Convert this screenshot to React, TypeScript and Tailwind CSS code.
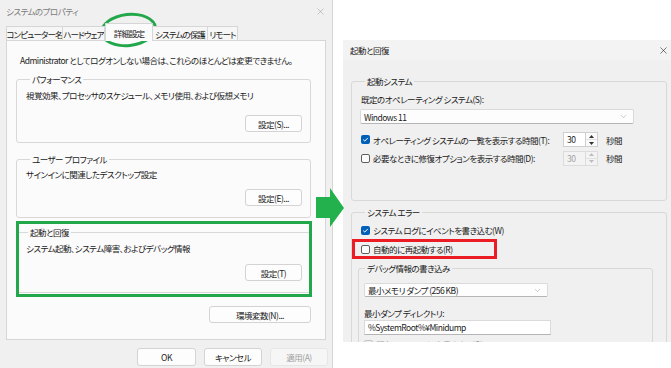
import type { ReactNode } from 'react';
import clsx from 'clsx';
import { X, ChevronDown } from 'lucide-react';

const GREEN = 'border-[#22a84a]';

function GroupBox({
  label,
  className,
  legendClass,
  children,
}: {
  label: string;
  className?: string;
  legendClass?: string;
  children: ReactNode;
}) {
  return (
    <fieldset className={clsx('border border-[#d8d8d8] rounded-[3px] min-w-0', className)}>
      <legend className={clsx('px-[2px] leading-[12px]', legendClass ?? 'ml-[4px]')}>{label}</legend>
      {children}
    </fieldset>
  );
}

function Button({ label, className, disabled }: { label: string; className?: string; disabled?: boolean }) {
  return (
    <div
      className={clsx(
        'h-[17px] flex items-center justify-center rounded-[3px] border',
        disabled ? 'bg-[#f6f6f6] border-[#e6e6e6] text-[#9d9d9d]' : 'bg-[#fdfdfd] border-[#d3d3d3] text-[#1a1a1a]',
        className
      )}
    >
      {label}
    </div>
  );
}

function Check({ checked, disabled }: { checked?: boolean; disabled?: boolean }) {
  if (checked) {
    return (
      <span className="w-[9px] h-[9px] shrink-0 rounded-[2px] bg-[#005fb8] flex items-center justify-center">
        <svg width="7" height="7" viewBox="0 0 7 7">
          <path d="M1.2 3.6 L2.8 5.1 L5.8 1.9" fill="none" stroke="#fff" strokeWidth="1" />
        </svg>
      </span>
    );
  }
  return (
    <span
      className={clsx(
        'w-[9px] h-[9px] shrink-0 rounded-[2px] border',
        disabled ? 'border-[#c4c4c4] bg-[#ececec]' : 'border-[#5f5f5f] bg-[#fbfbfb]'
      )}
    />
  );
}

function Spinner({ disabled }: { disabled?: boolean }) {
  return (
    <div className="flex h-[15px]">
      <div
        className={clsx(
          'w-[23px] border leading-[13px] pl-[3px]',
          disabled ? 'bg-[#f3f3f3] border-[#dcdcdc] text-[#a3a3a3]' : 'bg-white border-[#cfcfcf] text-[#1a1a1a]'
        )}
      >
        30
      </div>
      <div
        className={clsx(
          'w-[12px] flex flex-col border border-l-0',
          disabled ? 'bg-[#f3f3f3] border-[#dcdcdc]' : 'bg-[#fafafa] border-[#cfcfcf]'
        )}
      >
        <span className="flex-1 flex items-center justify-center border-b border-[#e0e0e0]">
          <svg width="5" height="3" viewBox="0 0 5 3">
            <path d="M0 3 L2.5 0 L5 3 Z" fill={disabled ? '#bdbdbd' : '#333'} />
          </svg>
        </span>
        <span className="flex-1 flex items-center justify-center">
          <svg width="5" height="3" viewBox="0 0 5 3">
            <path d="M0 0 L5 0 L2.5 3 Z" fill={disabled ? '#bdbdbd' : '#333'} />
          </svg>
        </span>
      </div>
    </div>
  );
}

function Select({ value, className }: { value: string; className?: string }) {
  return (
    <div
      className={clsx(
        'flex items-center justify-between bg-[#fdfdfd] border border-[#dadada] border-b-[#b5b5b5] rounded-[2px] pl-[3px] pr-[5px]',
        className
      )}
    >
      <span className="whitespace-pre">{value}</span>
      <ChevronDown size={9} strokeWidth={1} className="text-[#7a7a7a]" />
    </div>
  );
}

const tabs = [
  { label: 'コンピューター名', w: 'w-[57px]' },
  { label: 'ハードウェア', w: 'w-[42px]' },
  { label: '詳細設定', w: 'w-[48px]', active: true },
  { label: 'システムの保護', w: 'w-[55px]' },
  { label: 'リモート', w: 'w-[30px]' },
];

function SystemProperties() {
  return (
    <div className="relative w-[333px] h-[368px] shrink-0 bg-[#f0f0f0] border-r border-[#d6d6d6] flex flex-col">
      <div className="h-[22px] flex items-center justify-between pl-[6px] pr-[6px] text-[#7b7b7b]">
        <span>システムのプロパティ</span>
        <X size={11} strokeWidth={1} className="text-[#8a8a8a]" />
      </div>

      <div className="h-[19px] -mb-[1px] flex items-end pl-[6px] relative z-10 tracking-[-0.9px]">
        {tabs.map((t) =>
          t.active ? (
            <div
              key={t.label}
              className={clsx(
                t.w,
                'h-[18px] bg-[#fbfbfb] border border-b-0 border-[#d6d6d6] flex items-center justify-center whitespace-nowrap text-[#1a1a1a]'
              )}
            >
              {t.label}
            </div>
          ) : (
            <div
              key={t.label}
              className={clsx(
                t.w,
                'h-[15px] bg-[#f6f6f6] border border-l-0 first:border-l border-[#d6d6d6] flex items-center justify-center whitespace-nowrap overflow-hidden text-[#1a1a1a]'
              )}
            >
              {t.label}
            </div>
          )
        )}
      </div>

      <div className="mx-[6px] h-[300px] bg-[#fbfbfb] border border-[#d6d6d6] pt-[13px] pl-[9px] pr-[14px] flex flex-col text-[#1a1a1a]">
        <p className="pl-[4px] leading-[12px] whitespace-nowrap">
          Administrator としてログオンしない場合は、これらのほとんどは変更できません。
        </p>

        <GroupBox label="パフォーマンス" className="mt-[7px] pl-[9px] pr-[8px] pb-[10px]">
          <div className="flex flex-col">
            <p className="mt-[4px] leading-[12px]">視覚効果、プロセッサのスケジュール、メモリ使用、および仮想メモリ</p>
            <Button label="設定(S)..." className="mt-[14px] self-end w-[57px]" />
          </div>
        </GroupBox>

        <GroupBox label="ユーザー プロファイル" className="mt-[10px] pl-[9px] pr-[8px] pb-[11px]">
          <div className="flex flex-col">
            <p className="mt-[3px] leading-[12px]">サインインに関連したデスクトップ設定</p>
            <Button label="設定(E)..." className="mt-[9px] self-end w-[57px]" />
          </div>
        </GroupBox>

        <div className="relative mt-[8px]">
          <GroupBox label="起動と回復" className="pl-[9px] pr-[8px] pb-[11px]" legendClass="ml-[2px]">
            <div className="flex flex-col">
              <p className="mt-[4px] leading-[12px]">システム起動、システム障害、およびデバッグ情報</p>
              <Button label="設定(T)" className="mt-[10px] self-end w-[57px]" />
            </div>
          </GroupBox>
          <div className={clsx('absolute -top-[5px] -bottom-[4px] left-0 -right-[1px] border-[3px]', GREEN)} />
        </div>

        <Button label="環境変数(N)..." className="mt-[13px] self-end w-[102px]" />
      </div>

      <div className="mt-[8px] pr-[4px] flex justify-end gap-[8px]">
        <Button label="OK" className="w-[59px] h-[18px]" />
        <Button label="キャンセル" className="w-[58px] h-[18px]" />
        <Button label="適用(A)" className="w-[58px] h-[18px]" disabled />
      </div>

      <div className={clsx('absolute left-[100px] top-[13px] w-[57px] h-[34px] rounded-[50%] border-[3px] -rotate-6', GREEN)} />
    </div>
  );
}

function StartupRecovery() {
  return (
    <div className="ml-[10px] mt-[40px] w-[328px] h-[302px] shrink-0 bg-[#f0f0f0] flex flex-col overflow-hidden text-[#1a1a1a]">
      <div className="h-[20px] shrink-0 flex items-center justify-between pl-[7px] pr-[2px] bg-[#f3f3f3]">
        <span>起動と回復</span>
        <X size={11} strokeWidth={1.2} className="text-[#111]" />
      </div>

      <div className="pt-[15px] pl-[8px] pr-[4px] flex flex-col">
        <GroupBox label="起動システム" className="pl-[9px] pb-[35px]">
          <p className="mt-[6px] leading-[12px]">既定のオペレーティング システム(S):</p>
          <Select value="Windows 11" className="mt-[4px] w-[274px] h-[15px] -ml-[1px]" />

          <div className="mt-[8px] flex items-center h-[15px]">
            <div className="w-[202px] flex items-center gap-[3px] whitespace-nowrap">
              <Check checked />
              <span>オペレーティング システムの一覧を表示する時間(T):</span>
            </div>
            <Spinner />
            <span className="ml-[8px]">秒間</span>
          </div>
          <div className="mt-[4px] flex items-center h-[14px]">
            <div className="w-[202px] flex items-center gap-[3px] whitespace-nowrap">
              <Check />
              <span>必要なときに修復オプションを表示する時間(D):</span>
            </div>
            <Spinner disabled />
            <span className="ml-[8px]">秒間</span>
          </div>
        </GroupBox>

        <GroupBox label="システム エラー" className="mt-[5px] pl-[9px] h-[200px]">
          <div className="mt-[5px] flex items-center gap-[3px] h-[14px]">
            <Check checked />
            <span>システム ログにイベントを書き込む(W)</span>
          </div>
          <div className="relative mt-[5px] flex items-center gap-[3px] h-[14px] w-fit">
            <Check />
            <span>自動的に再起動する(R)</span>
            <div className="absolute -left-[9px] -top-[3px] -bottom-[3px] w-[145px] border-[3px] border-[#ec1c24]" />
          </div>

          <GroupBox
            label="デバッグ情報の書き込み"
            className="mt-[6px] -ml-[3px] mr-[13px] pl-[5px] h-[120px]"
            legendClass="ml-[1px]"
          >
            <Select value="最小メモリ ダンプ (256 KB)" className="mt-[9px] w-[184px] h-[14px]" />
            <p className="mt-[10px] leading-[12px]">最小ダンプ ディレクトリ:</p>
            <div className="mt-[1px] w-[187px] h-[15px] bg-white border border-[#dadada] border-b-[#b5b5b5] pl-[3px] leading-[13px]">
              %SystemRoot%¥Minidump
            </div>
            <div className="mt-[3px] flex items-center gap-[3px] h-[12px] text-[#a0a0a0]">
              <Check disabled />
              <span>既存のファイルに上書きする(O)</span>
            </div>
          </GroupBox>
        </GroupBox>
      </div>
    </div>
  );
}

export default function App() {
  return (
    <div className="relative w-[671px] h-[368px] bg-white flex items-start overflow-hidden text-[8.5px] leading-[12px] tracking-[-0.5px] font-['Noto_Sans_CJK_JP','Noto_Sans',sans-serif] [font-feature-settings:'palt']">
      <SystemProperties />
      <StartupRecovery />
      <svg className="absolute left-[316px] top-[188px]" width="29" height="40" viewBox="0 0 29 40">
        <path d="M0 9 H14 V0 L28 20 L14 39 V30 H0 Z" fill="#22b14c" />
      </svg>
    </div>
  );
}
